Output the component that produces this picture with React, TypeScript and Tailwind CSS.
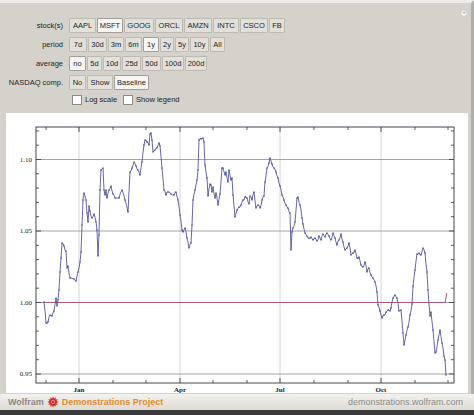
import React from "react";

type Btn = { label: string; w: string; on?: boolean };

const stocks: Btn[] = [
  { label: "AAPL", w: "w-[27px]" },
  { label: "MSFT", w: "w-[26px]", on: true },
  { label: "GOOG", w: "w-[30px]" },
  { label: "ORCL", w: "w-[28px]" },
  { label: "AMZN", w: "w-[28px]" },
  { label: "INTC", w: "w-[26px]" },
  { label: "CSCO", w: "w-[28px]" },
  { label: "FB", w: "w-[16px]" },
];

const periods: Btn[] = [
  { label: "7d", w: "w-[18px]" },
  { label: "30d", w: "w-[19px]" },
  { label: "3m", w: "w-[16px]" },
  { label: "6m", w: "w-[17px]" },
  { label: "1y", w: "w-[16px]", on: true },
  { label: "2y", w: "w-[14px]" },
  { label: "5y", w: "w-[14px]" },
  { label: "10y", w: "w-[19px]" },
  { label: "All", w: "w-[15px]" },
];

const averages: Btn[] = [
  { label: "no", w: "w-[17px]", on: true },
  { label: "5d", w: "w-[15px]" },
  { label: "10d", w: "w-[18px]" },
  { label: "25d", w: "w-[19px]" },
  { label: "50d", w: "w-[19px]" },
  { label: "100d", w: "w-[22px]" },
  { label: "200d", w: "w-[22px]" },
];

const nasdaq: Btn[] = [
  { label: "No", w: "w-[17px]" },
  { label: "Show", w: "w-[26px]" },
  { label: "Baseline", w: "w-[35px]", on: true },
];

// price path, page pixel coords (x, y)
const KEY: [number, number][] = [
  [44, 302], [46, 323], [48, 322], [50, 315], [52, 316], [54, 311], [56, 298], [57, 306],
  [58, 300], [59, 290], [60, 272], [61, 258], [62, 243], [64, 246], [66, 251], [67, 268],
  [68, 266], [70, 278], [74, 279], [76, 281], [78, 272], [80, 262], [81, 252], [82, 225],
  [83, 200], [84, 193], [86, 200], [87, 213], [88, 222], [89, 206], [90, 211], [92, 218],
  [94, 214], [96, 222], [97, 230], [98, 256], [99, 235], [100, 190], [101, 170], [103, 168],
  [104, 190], [105, 195], [106, 190], [107, 198], [109, 190], [111, 186], [113, 194], [115, 198],
  [119, 198], [122, 190], [125, 200], [128, 212], [130, 172], [132, 168], [134, 162], [136, 166],
  [138, 170], [140, 175], [142, 162], [144, 145], [145, 140], [147, 142], [149, 145], [150, 134],
  [151, 133], [152, 140], [153, 152], [155, 150], [157, 148], [159, 143], [160, 146], [162, 168],
  [164, 190], [166, 195], [168, 192], [171, 194], [174, 195], [176, 192], [178, 200], [180, 215],
  [182, 230], [183, 232], [185, 228], [187, 238], [189, 248], [191, 243], [192, 225], [193, 200],
  [195, 190], [197, 180], [198, 170], [199, 140], [201, 139], [203, 138], [204, 142], [205, 165],
  [207, 178], [208, 196], [210, 184], [211, 185], [212, 192], [213, 187], [215, 198], [216, 193],
  [218, 205], [220, 194], [222, 168], [223, 168], [225, 175], [226, 172], [228, 182], [229, 170],
  [231, 180], [232, 178], [233, 195], [235, 217], [237, 210], [239, 207], [241, 205], [243, 200],
  [245, 197], [247, 198], [249, 204], [250, 196], [252, 200], [254, 192], [256, 208], [258, 205],
  [260, 208], [262, 200], [264, 196], [265, 182], [267, 168], [269, 163], [270, 158], [272, 164],
  [274, 168], [276, 172], [278, 178], [280, 186], [282, 195], [284, 200], [286, 205], [288, 208],
  [290, 213], [291, 250], [292, 232], [293, 228], [295, 222], [297, 198], [298, 197], [300, 205],
  [302, 218], [303, 224], [305, 233], [307, 236], [309, 238], [311, 237], [313, 240], [315, 238],
  [317, 241], [319, 236], [321, 240], [323, 234], [325, 237], [327, 233], [329, 236], [331, 240],
  [333, 233], [335, 238], [337, 245], [339, 240], [341, 234], [343, 242], [345, 250], [347, 248],
  [349, 243], [351, 255], [353, 253], [355, 250], [357, 258], [359, 257], [361, 265], [363, 267],
  [365, 262], [367, 272], [369, 268], [371, 275], [373, 278], [375, 282], [377, 292], [378, 305],
  [380, 311], [382, 318], [384, 315], [386, 312], [388, 310], [390, 311], [391, 308], [393, 298],
  [395, 295], [397, 298], [399, 311], [401, 310], [403, 333], [404, 345], [406, 335], [408, 327],
  [410, 315], [412, 304], [413, 286], [415, 270], [417, 254], [419, 253], [421, 255], [423, 248],
  [425, 253], [427, 272], [428, 290], [430, 316], [431, 312], [433, 330], [435, 353], [436, 352],
  [438, 340], [440, 330], [442, 343], [444, 356], [445, 360], [446, 375],
];

function buildSeries() {
  const pts: [number, number][] = [];
  for (let i = 0; i < KEY.length; i++) {
    const [x1, y1] = KEY[i];
    pts.push([x1, y1]);
    const next = KEY[i + 1];
    if (next && next[0] - x1 >= 2) {
      const h = Math.sin(i * 12.9898) * 43758.5453;
      const r = (h - Math.floor(h) - 0.5) * 3;
      pts.push([(x1 + next[0]) / 2, (y1 + next[1]) / 2 + r]);
    }
  }
  return pts;
}

const series = buildSeries();
const yOf = (v: number) => 302.5 - (v - 1) * 1430;
const monthTicks = [46, 79, 113, 146, 180, 213, 247, 280, 314, 348, 381, 415, 448];
const quarters = [79, 180, 280, 381];

function ButtonRow({ label, items }: { label: string; items: Btn[] }) {
  return (
    <div className="flex items-center h-[15px]">
      <div className="w-[64px] text-right text-[#222] pr-[1px]">{label}</div>
      <div className="flex gap-px ml-[5px]">
        {items.map((b) => (
          <div
            key={b.label}
            className={`${b.w} h-[15px] flex items-center justify-center border rounded-[1px] text-[#1e1e1e] ${
              b.on
                ? "bg-[#f6f5f2] border-[#a19e96]"
                : "bg-[#e3e0da] border-[#bdbab2]"
            }`}
          >
            {b.label}
          </div>
        ))}
      </div>
    </div>
  );
}

function Chart() {
  const line = series.map(([x, y]) => `${x},${y.toFixed(1)}`).join(" ");
  const yTicks = Array.from({ length: 18 }, (_, k) => 0.95 + k * 0.01);
  return (
    <svg width={462} height={280} viewBox="6 113 462 280" className="block bg-white">
      {/* vertical grid */}
      {quarters.map((x) => (
        <line key={x} x1={x} y1={127} x2={x} y2={383} stroke="#d6d6d6" strokeWidth={1} />
      ))}
      {/* horizontal grid */}
      {[1.1, 1.05, 1.0, 0.95].map((v) => (
        <line key={v} x1={36} y1={yOf(v)} x2={454} y2={yOf(v)} stroke="#9a9a9a" strokeWidth={0.9} />
      ))}
      {/* nasdaq baseline */}
      <polyline
        points="44,302.5 445,302.5 446,298 446.5,293"
        fill="none"
        stroke="#a5587a"
        strokeWidth={1}
      />
      {/* frame */}
      <rect x={36} y={127} width={418} height={256} fill="none" stroke="#333" strokeWidth={0.9} />
      {monthTicks.map((x) => (
        <g key={x} stroke="#333" strokeWidth={0.8}>
          <line x1={x} y1={127} x2={x} y2={quarters.includes(x) ? 132 : 130} />
          <line x1={x} y1={383} x2={x} y2={quarters.includes(x) ? 378 : 380} />
        </g>
      ))}
      {yTicks.map((v, k) => {
        const y = yOf(v);
        const len = k % 5 === 0 ? 5 : 3;
        return (
          <g key={k} stroke="#333" strokeWidth={0.8}>
            <line x1={36} y1={y} x2={36 + len} y2={y} />
            <line x1={454} y1={y} x2={454 - len} y2={y} />
          </g>
        );
      })}
      {/* price */}
      <polyline points={line} fill="none" stroke="#55559c" strokeWidth={0.9} strokeLinejoin="round" />
      {KEY.map(([x, y], i) => (
        <circle key={i} cx={x} cy={y} r={0.7} fill="#44448a" />
      ))}
      {/* labels */}
      <g fontFamily="'Liberation Serif', serif" fontSize={7} fill="#222">
        {[["1.10", 1.1], ["1.05", 1.05], ["1.00", 1.0], ["0.95", 0.95]].map(([t, v]) => (
          <text key={t as string} x={32} y={yOf(v as number) + 2.4} textAnchor="end">
            {t}
          </text>
        ))}
        {[["Jan", 79], ["Apr", 180], ["Jul", 280], ["Oct", 381]].map(([t, x]) => (
          <text key={t as string} x={x as number} y={392} textAnchor="middle" fontWeight={700}>
            {t}
          </text>
        ))}
      </g>
    </svg>
  );
}

function Spikey() {
  const pts: string[] = [];
  for (let i = 0; i < 24; i++) {
    const a = (i * Math.PI) / 12;
    const r = i % 2 === 0 ? 5.5 : 3.6;
    pts.push(`${(6 + r * Math.sin(a)).toFixed(2)},${(6 - r * Math.cos(a)).toFixed(2)}`);
  }
  return (
    <svg width={12} height={12} viewBox="0 0 12 12" className="mx-[3px]">
      <polygon points={pts.join(" ")} fill="#d7262b" />
      <circle cx={6} cy={6} r={2.2} fill="#f07a6e" />
      <circle cx={6} cy={6} r={1} fill="#c81f25" />
    </svg>
  );
}

export default function App() {
  return (
    <div
      className="w-[474px] h-[415px] flex flex-col overflow-hidden text-[7.5px] leading-none"
      style={{ fontFamily: "'Liberation Sans', Arial, sans-serif" }}
    >
      <div className="relative flex-1 flex flex-col bg-[#d5d2cb] border-t-[3px] border-t-[#eeede9] border-r-[3px] border-r-[#b1aea7]">
        <div className="absolute right-[3px] top-[6px] w-[8px] h-[8px] rounded-full bg-[#f4f3f0] border border-[#c9c6bf] flex items-center justify-center text-[#a9a6a0] text-[8px] leading-none">
          +
        </div>

        <div className="flex flex-col gap-[4px] pt-[15px]">
          <ButtonRow label="stock(s)" items={stocks} />
          <ButtonRow label="period" items={periods} />
          <ButtonRow label="average" items={averages} />
          <ButtonRow label="NASDAQ comp." items={nasdaq} />
        </div>

        <div className="flex items-center h-[11px] mt-[4px] pl-[72px] text-[#222]">
          <div className="w-[10px] h-[10px] bg-white border border-[#8e8b84]" />
          <span className="ml-[3px]">Log scale</span>
          <div className="w-[10px] h-[10px] bg-white border border-[#8e8b84] ml-[6px]" />
          <span className="ml-[3px]">Show legend</span>
        </div>

        <div className="mt-[8px] ml-[6px]">
          <Chart />
        </div>
      </div>

      <div className="h-[16px] flex items-center justify-between pl-[8px] pr-[11px] bg-gradient-to-b from-[#f3f2ee] to-[#dedbd4] text-[9px]">
        <div className="flex items-center">
          <span className="text-[#8a8a86] font-semibold">Wolfram</span>
          <Spikey />
          <span className="text-[#e48b2c] font-semibold">Demonstrations Project</span>
        </div>
        <span className="text-[#8c8c88]">demonstrations.wolfram.com</span>
      </div>
      <div className="h-[5px] bg-[#3a3a3a]" />
    </div>
  );
}
